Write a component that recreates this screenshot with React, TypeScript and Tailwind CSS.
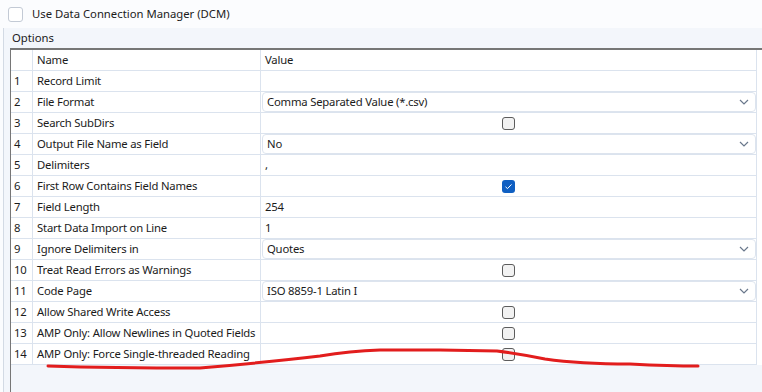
import { ReactNode } from 'react';

type Row = {
  name: string;
  kind: 'text' | 'select' | 'check';
  value?: string;
  checked?: boolean;
};

const rows: Row[] = [
  { name: 'Record Limit', kind: 'text', value: '' },
  { name: 'File Format', kind: 'select', value: 'Comma Separated Value (*.csv)' },
  { name: 'Search SubDirs', kind: 'check' },
  { name: 'Output File Name as Field', kind: 'select', value: 'No' },
  { name: 'Delimiters', kind: 'text', value: ',' },
  { name: 'First Row Contains Field Names', kind: 'check', checked: true },
  { name: 'Field Length', kind: 'text', value: '254' },
  { name: 'Start Data Import on Line', kind: 'text', value: '1' },
  { name: 'Ignore Delimiters in', kind: 'select', value: 'Quotes' },
  { name: 'Treat Read Errors as Warnings', kind: 'check' },
  { name: 'Code Page', kind: 'select', value: 'ISO 8859-1 Latin I' },
  { name: 'Allow Shared Write Access', kind: 'check' },
  { name: 'AMP Only: Allow Newlines in Quoted Fields', kind: 'check' },
  { name: 'AMP Only: Force Single-threaded Reading', kind: 'check' },
];

function CheckBox({ checked }: { checked?: boolean }) {
  if (checked) {
    return (
      <div className="flex h-[13px] w-[13px] items-center justify-center rounded-[3px] bg-[#0f5fc2]">
        <svg width="9" height="9" viewBox="0 0 9 9">
          <polyline points="1.5,4.8 3.5,6.6 7.5,2.4" fill="none" stroke="#ffffff" strokeWidth="1" />
        </svg>
      </div>
    );
  }
  return <div className="h-[13px] w-[13px] rounded-[3px] border border-[#5c5c5c] bg-[#f2f2f2]" />;
}

function Chevron() {
  return (
    <svg width="10" height="6" viewBox="0 0 10 6">
      <polyline points="1,1 5,5 9,1" fill="none" stroke="#6a788c" strokeWidth="1.2" />
    </svg>
  );
}

function Cell({ children, className }: { children?: ReactNode; className?: string }) {
  return (
    <div
      className={
        'flex h-[21px] items-center overflow-hidden whitespace-nowrap border-b border-r border-[#dbe3ee] ' +
        (className || '')
      }
    >
      {children}
    </div>
  );
}

export default function App() {
  return (
    <div
      className="relative flex h-[392px] w-[762px] flex-col overflow-hidden bg-[#fbfcfe] text-[11.3px] text-[#1b1b1b]"
      style={{ fontFamily: '"Noto Sans", "Segoe UI", sans-serif' }}
    >
      <div className="flex h-[28px] items-center gap-[9px] pl-[8px]">
        <div className="h-[15px] w-[15px] rounded-[3px] border border-[#c3cad5] bg-white" />
        <span>Use Data Connection Manager (DCM)</span>
      </div>

      <div className="ml-[3px] flex flex-1 flex-col border-l border-[#d3dae4] bg-[#f3f6fb]">
        <div className="flex h-[20px] items-center pl-[8px]">Options</div>

        <div className="ml-[6px] flex-1 border-l border-t-2 border-[#767676] tracking-[-0.2px]">
          <div className="grid grid-cols-[22px_228px_496px] bg-white">
            <Cell />
            <Cell className="pl-[4px]">Name</Cell>
            <Cell className="pl-[4px]">Value</Cell>

            {rows.map((row, i) => (
              <div key={row.name} className="contents">
                <Cell className="pl-[3px]">{i + 1}</Cell>
                <Cell className="pl-[4px]">{row.name}</Cell>
                {row.kind === 'text' && <Cell className="pl-[4px]">{row.value}</Cell>}
                {row.kind === 'check' && (
                  <Cell className="justify-center">
                    <CheckBox checked={row.checked} />
                  </Cell>
                )}
                {row.kind === 'select' && (
                  <Cell className="pl-[1px]">
                    <div className="flex h-[20px] w-full items-center justify-between rounded-[4px] border border-[#dde4ee] bg-white pl-[4px] pr-[6px]">
                      <span>{row.value}</span>
                      <Chevron />
                    </div>
                  </Cell>
                )}
              </div>
            ))}
          </div>
        </div>
      </div>

      <svg className="pointer-events-none absolute left-0 top-0" width="762" height="392">
        <path
          d="M48 366 Q110 368 200 368 Q270 362 320 356 Q350 351 380 350 L440 350 L497 351 Q520 354 545 359 Q580 364 630 364 Q670 366 698 366"
          fill="none"
          stroke="#e21d1d"
          strokeWidth="3"
          strokeLinecap="round"
          strokeLinejoin="round"
        />
      </svg>
    </div>
  );
}
